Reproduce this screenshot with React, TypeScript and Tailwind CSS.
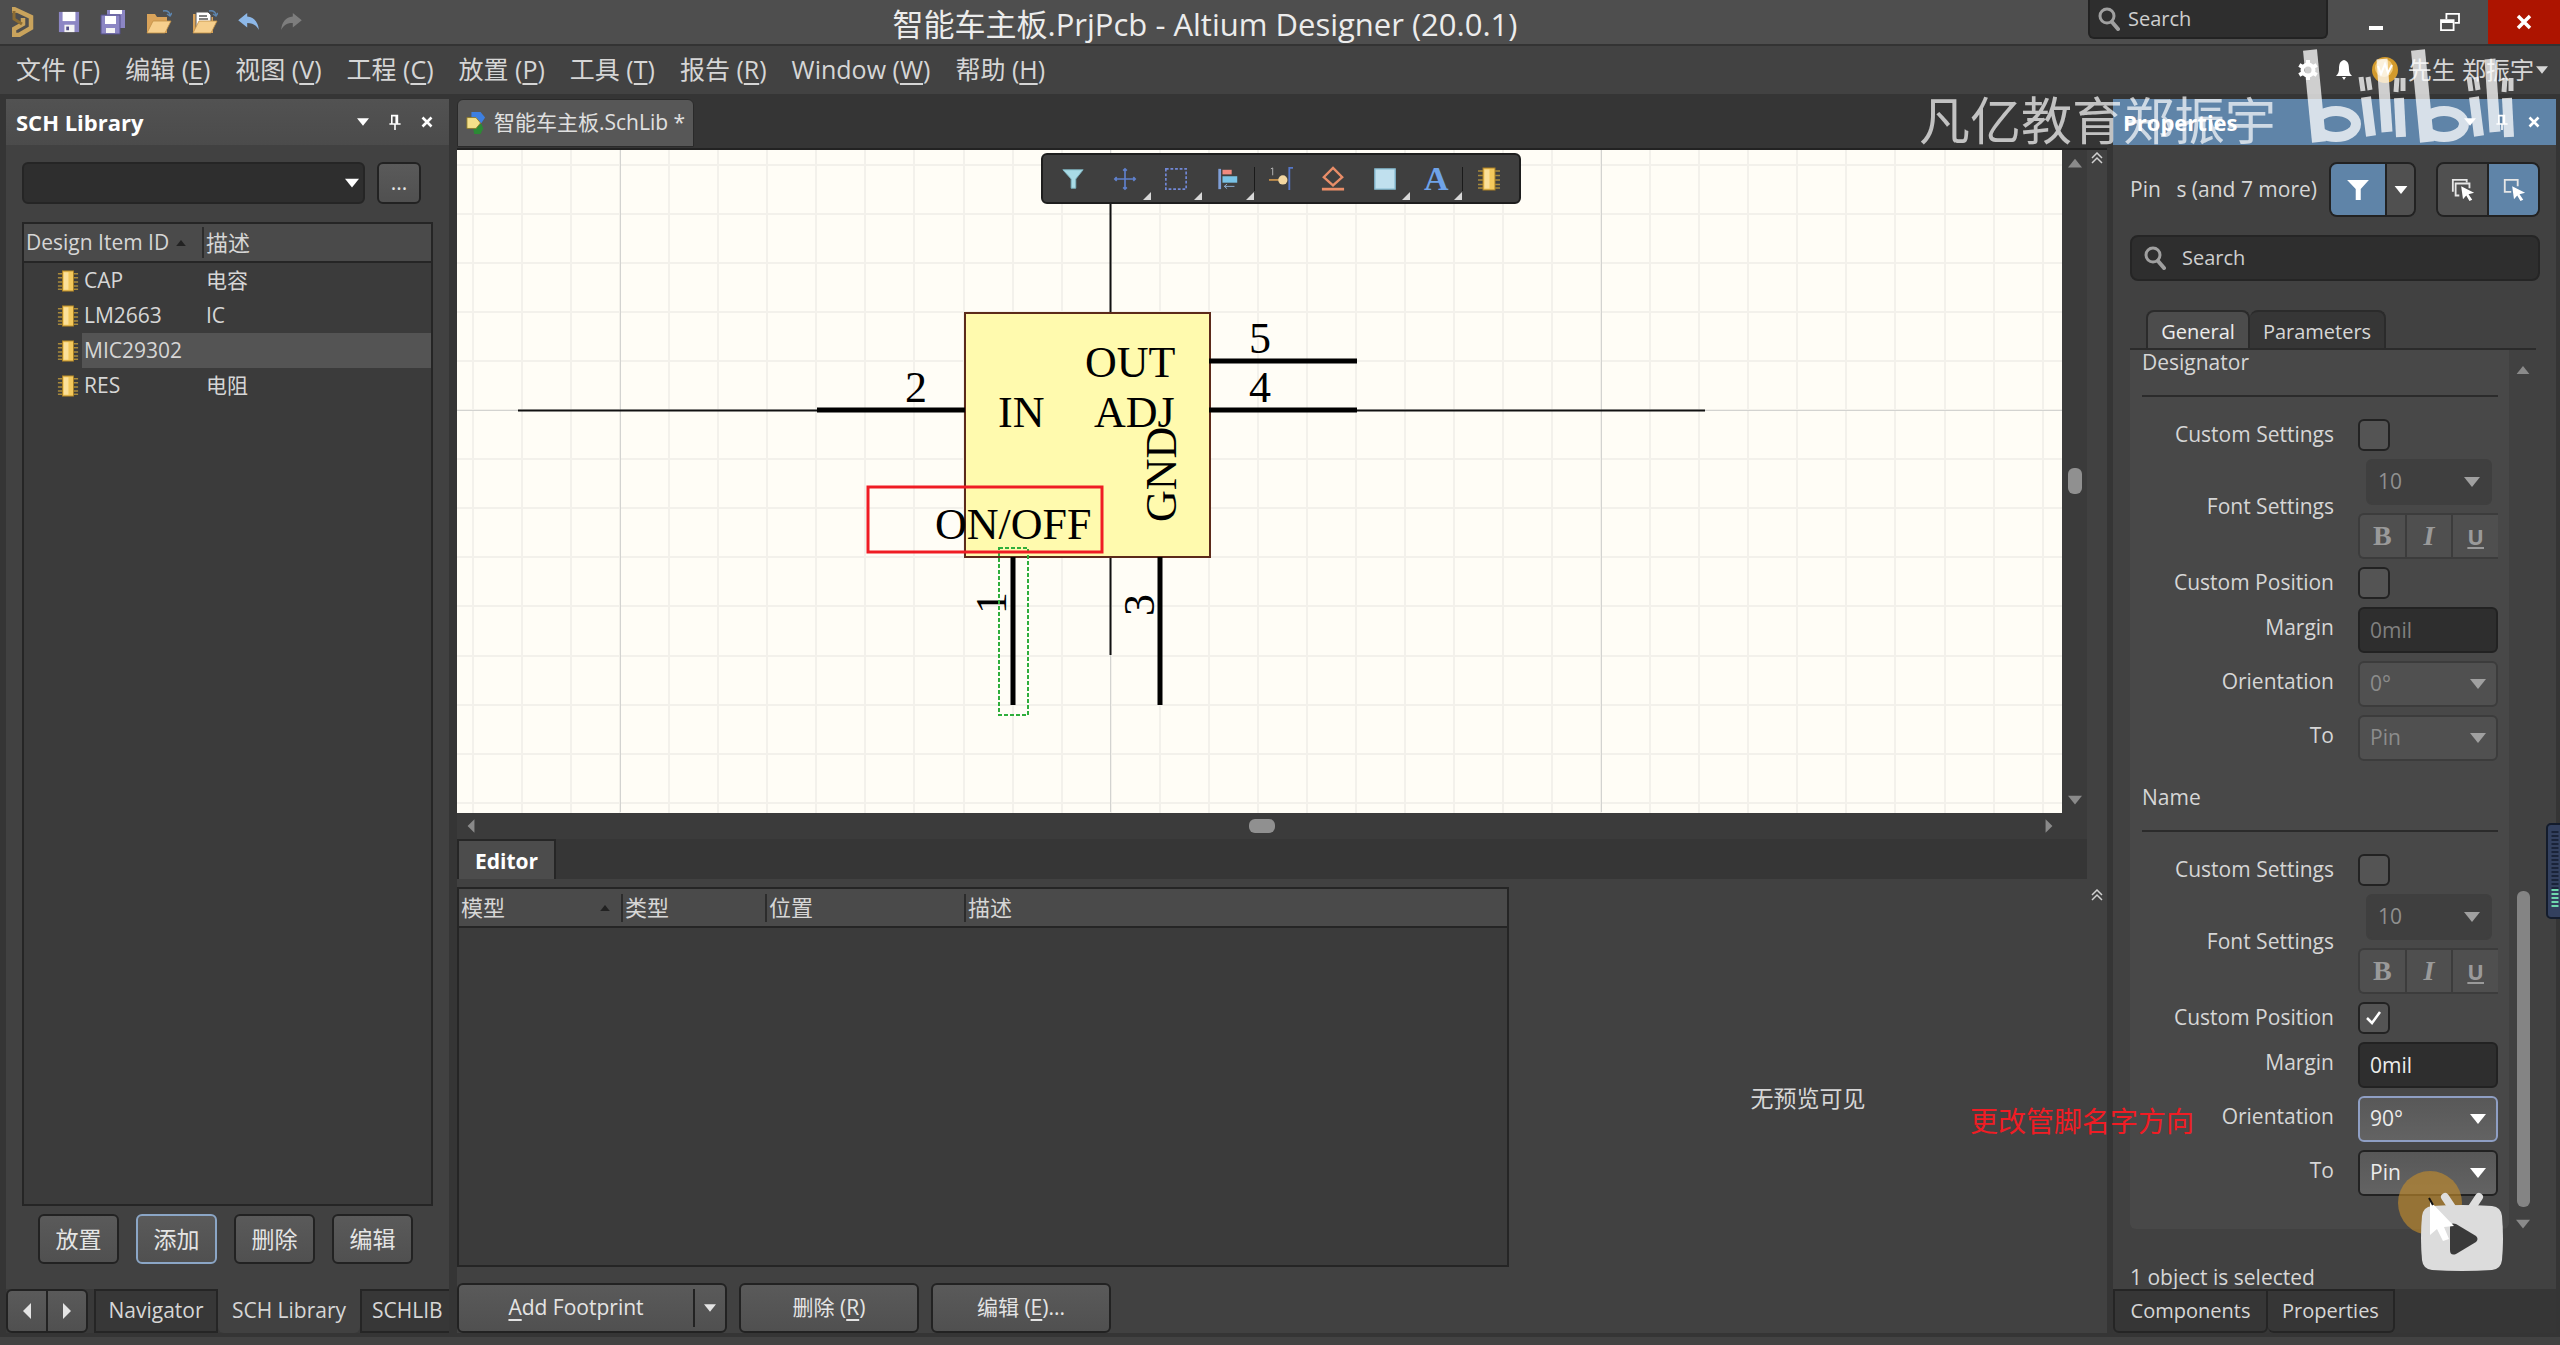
import React from 'react';
import { clsx } from 'clsx';

const FONT = "font-['Open_Sans','Noto_Sans_CJK_SC',sans-serif]";
const FACE = 'border-2 bg-linear-to-b from-[#5a5a5a] to-[#505050] text-[#e4e4e4]';
const BTN = `${FACE} border-[#222222]`;

const MENU = [
  ['文件', 'F'],
  ['编辑', 'E'],
  ['视图', 'V'],
  ['工程', 'C'],
  ['放置', 'P'],
  ['工具', 'T'],
  ['报告', 'R'],
  ['Window', 'W'],
  ['帮助', 'H'],
];

const PARTS = [
  { id: 'CAP', desc: '电容' },
  { id: 'LM2663', desc: 'IC' },
  { id: 'MIC29302', desc: '' },
  { id: 'RES', desc: '电阻' },
];

type Dir = 'up' | 'down' | 'left' | 'right';

const ARROWS: Record<Dir, string> = {
  up: 'M0 10 8 0l8 10z',
  down: 'M0 0h16L8 10z',
  left: 'M11 0v16L3 8z',
  right: 'M3 0v16l8-8z',
};

const Arrow: React.FC<{ dir: Dir; className?: string }> = ({ dir, className }) => (
  <svg
    viewBox={dir === 'up' || dir === 'down' ? '0 0 16 10' : '0 0 14 16'}
    className={clsx('shrink-0 fill-current', className)}
    aria-hidden="true"
  >
    <path d={ARROWS[dir]} />
  </svg>
);

const PinIcon = () => (
  <svg viewBox="0 0 14 20" className="h-4 w-3" fill="none" stroke="currentColor" strokeWidth="2">
    <path d="M3 12V2h7v10M0 12.500h14M7 13v7" />
    <path d="M9 2v10" strokeWidth="3" />
  </svg>
);

const CrossIcon: React.FC<{ className?: string }> = ({ className }) => (
  <svg viewBox="0 0 12 12" className={clsx('shrink-0', className)} fill="none" stroke="currentColor" strokeWidth="2.6">
    <path d="m1.500 1.500 9 9M10.500 1.500l-9 9" />
  </svg>
);

const SearchIcon = () => (
  <svg viewBox="0 0 22 24" className="h-6 w-[22px] shrink-0" fill="none" stroke="#a0a0a0">
    <circle cx="9" cy="9" r="7" strokeWidth="3" />
    <path d="m14 15 6 7" strokeWidth="4" strokeLinecap="round" />
  </svg>
);

const ChipIcon: React.FC<{ className?: string }> = ({ className }) => (
  <svg viewBox="0 0 24 24" className={clsx('shrink-0', className)}>
    <path d="M1 4h22M1 8.500h22M1 13h22M1 17.500h22M1 21h22" stroke="#a98a3c" strokeWidth="1.600" />
    <rect x="6" y="1" width="12" height="22" fill="#f4c95c" stroke="#a97f25" />
    <rect x="7.500" y="2.500" width="5" height="19" fill="#fbe09a" />
  </svg>
);

const ChevronsUp = () => (
  <svg viewBox="0 0 12 12" className="h-3 w-3" fill="none" stroke="#d0d0d0" strokeWidth="1.500">
    <path d="m1 6 5-5 5 5M1 11l5-5 5 5" />
  </svg>
);

const SaveIcon = () => (
  <svg viewBox="0 0 24 24" className="size-[22px]">
    <path d="M1 1h22v22H1z" fill="#8c86c4" />
    <path d="M5 1h14v10H5z" fill="#fff" />
    <path d="M7 15h11v8H7z" fill="#f4f4f4" />
    <path d="M9 17h3v4H9z" fill="#55508a" />
  </svg>
);

const SaveAllIcon = () => (
  <svg viewBox="0 0 26 26" className="size-[26px]">
    <path d="M7 1h18v18H7z" fill="#8c86c4" />
    <path d="M10 1h12v4H10z" fill="#fff" />
    <path d="M1 6h19v19H1z" fill="#8c86c4" stroke="#55508a" />
    <path d="M5 7h11v8H5z" fill="#fff" />
    <path d="M6 19h9v5H6z" fill="#f4f4f4" />
  </svg>
);

const FolderIcon: React.FC<{ doc?: boolean }> = ({ doc }) => (
  <svg viewBox="0 0 26 26" className="size-[26px]">
    <path d="M1 5h8l2 3h10v16H1z" fill="#d9a35a" />
    {doc && <path d="M4 3h12l3 3v13H4z" fill="#fff" stroke="#555" />}
    {doc && <path d="M7 7h8M7 10h9M7 13h9" stroke="#555" strokeWidth="1.500" />}
    <path d="M7 12h18l-6 12H1z" fill="#f6cf8d" stroke="#c28f45" strokeWidth="0.800" />
    <path d="M17 2q6-1 7 4m-3-1 3 2 2-3" fill="none" stroke="#5d86b0" strokeWidth="1.500" />
  </svg>
);

const UndoIcon: React.FC<{ redo?: boolean }> = ({ redo }) => (
  <svg viewBox="0 0 24 20" className={clsx('h-[18px] w-[22px]', redo ? '-scale-x-100 text-[#7d7d7d]' : 'text-[#8db8e8]')}>
    <path d="M10 0v4c8 1 12 6 13 15-3-6-7-8-13-8v5L0 8z" fill="currentColor" />
  </svg>
);

const CursorBoxIcon: React.FC<{ stacked?: boolean }> = ({ stacked }) => (
  <svg viewBox="0 0 26 26" className="size-6" fill="none" stroke="#e6e6e6" strokeWidth="2">
    {stacked && <path d="M2 15V2h15v3" />}
    {stacked ? <path d="M9 19H5V6h15v5" /> : <path d="M10 15H3V2h14v7" />}
    <path d="m11 9 14 7-6 1.500 4 6-3 1.500-3.500-6-3.500 4z" fill="#fff" stroke="none" />
  </svg>
);

const PanelHeader: React.FC<{ title: string; active?: boolean }> = ({ title, active }) => (
  <div
    className={clsx(
      'flex h-[46px] shrink-0 items-center justify-between pr-4 pl-2.5 text-[22px] font-bold text-white',
      active ? 'bg-[#5f84a8]' : 'bg-linear-to-b from-[#525252] to-[#4b4b4b]',
    )}
  >
    <h2>{title}</h2>
    <div className="flex items-center gap-5">
      <button aria-label="Panel menu">
        <Arrow dir="down" className="h-2 w-3" />
      </button>
      <button aria-label="Pin panel">
        <PinIcon />
      </button>
      <button aria-label="Close panel">
        <CrossIcon className="size-3" />
      </button>
    </div>
  </div>
);

const TitleBar = () => (
  <header className="relative flex h-[46px] shrink-0 items-start justify-between border-b-2 border-[#333333] bg-[#4e4e4e]">
    <div className="flex h-11 items-center gap-5 pl-3">
      <svg viewBox="0 0 22 30" className="h-[30px] w-[22px]" fill="none">
        <path d="M2 6V2l17 8v11L7 28H2v-6l9-5v-6" stroke="#c9a35c" strokeWidth="4.500" />
        <path d="M2 4v8l8 5" stroke="#8b6c33" strokeWidth="3" />
      </svg>
      <button aria-label="Save" className="ml-1">
        <SaveIcon />
      </button>
      <button aria-label="Save all">
        <SaveAllIcon />
      </button>
      <button aria-label="Open">
        <FolderIcon />
      </button>
      <button aria-label="Open project">
        <FolderIcon doc />
      </button>
      <button aria-label="Undo">
        <UndoIcon />
      </button>
      <button aria-label="Redo">
        <UndoIcon redo />
      </button>
    </div>
    <h1 className="absolute inset-x-0 top-0 mx-auto w-fit pr-[150px] text-[31px] leading-[48px] text-[#ececec]">
      智能车主板.PrjPcb - Altium Designer (20.0.1)
    </h1>
    <div className="relative flex items-start">
      <label className="mr-10 flex h-[39px] w-60 items-center gap-2 rounded-b-md border-2 border-t-0 border-[#222222] bg-[#2e2e2e] px-2">
        <SearchIcon />
        <input aria-label="Search" placeholder="Search" className="w-full text-xl text-white placeholder:text-[#cfcfcf]" />
      </label>
      <button aria-label="Minimize" className="flex h-11 w-4 items-center justify-center pt-3">
        <span className="h-1 w-3.5 bg-white" />
      </button>
      <button aria-label="Restore" className="mr-7 ml-14 flex h-11 items-center">
        <svg viewBox="0 0 22 20" className="h-[18px] w-5" fill="none" stroke="#fff" strokeWidth="2">
          <path d="M7 7V1h14v10h-5" />
          <path d="M1 8h14v11H1zM1 10h14" />
        </svg>
      </button>
      <button aria-label="Close" className="flex h-11 w-[72px] items-center justify-center bg-[#ad1400] text-white">
        <CrossIcon className="size-4" />
      </button>
    </div>
  </header>
);

const MenuBar = () => (
  <nav className="flex h-12 shrink-0 items-center justify-between bg-[#424242] pr-3 pl-4 text-[#d6d6d6]">
    <div className="flex gap-[25px] text-[25px]">
      {MENU.map(([label, key]) => (
        <button key={key}>
          {label} (<u className="underline-offset-4">{key}</u>)
        </button>
      ))}
    </div>
    <div className="flex items-center text-2xl">
      <button aria-label="Settings">
        <svg viewBox="0 0 20 20" className="size-5" fill="none" stroke="#fff">
          <circle cx="10" cy="10" r="5.500" strokeWidth="4" />
          <path d="M10 0v4m0 12v4M1.300 5l3.500 2m10.400 6 3.500 2M1.300 15l3.500-2m10.400-6 3.500-2" strokeWidth="4" />
        </svg>
      </button>
      <button aria-label="Notifications" className="ml-[18px]">
        <svg viewBox="0 0 16 20" className="h-5 w-4 fill-white">
          <path d="M8 0c4 1 5 4 5 9 0 3 1 5 3 7H0c2-2 3-4 3-7 0-5 1-8 5-9zM6 17h4l-2 3z" />
        </svg>
      </button>
      <svg viewBox="0 0 26 26" className="mr-2.5 ml-5 size-[26px]">
        <circle cx="13" cy="13" r="13" fill="#d39a2c" />
        <circle cx="12" cy="11" r="9" fill="#f0c878" />
        <path d="m6 9 3 8 4-10 3 9 4-8" fill="none" stroke="#fff" strokeWidth="2" />
      </svg>
      <button className="flex items-center">
        先生 郑振宇
        <Arrow dir="down" className="ml-0.5 h-2 w-3" />
      </button>
    </div>
  </nav>
);

const LibraryPanel = () => (
  <aside className="mt-[5px] flex w-[443px] shrink-0 flex-col bg-[#414141] text-[21px] text-[#d6d6d6]">
    <PanelHeader title="SCH Library" />
    <div className="flex min-h-0 flex-1 flex-col px-4 pt-[17px]">
      <div className="flex gap-3 pr-3">
        <div className="relative flex-1">
          <select aria-label="Library" className="h-[42px] w-full appearance-none rounded-md border-2 border-[#252525] bg-[#2e2e2e]" />
          <Arrow dir="down" className="pointer-events-none absolute top-4 right-1.5 h-2.5 w-3.5 text-white" />
        </div>
        <button aria-label="More" className={clsx(BTN, 'h-[42px] w-11 rounded-md')}>
          ...
        </button>
      </div>
      <div className="mt-[18px] min-h-0 flex-1 border-2 border-[#252525] bg-[#3b3b3b]">
        <table className="w-full table-fixed border-collapse">
          <thead>
            <tr className="h-[38px] border-b-2 border-[#252525] bg-[#4a4a4a] text-left">
              <th className="w-[180px] pl-0.5 font-normal">
                <div className="flex items-center border-r-2 border-[#2c2c2c] whitespace-nowrap">
                  Design Item ID
                  <Arrow dir="up" className="ml-1.5 h-1.5 w-3 text-[#222222]" />
                </div>
              </th>
              <th className="pl-0.5 text-[22px] font-normal">描述</th>
            </tr>
          </thead>
          <tbody>
            {PARTS.map((part) => (
              <tr key={part.id} className="h-[35px]">
                <td className="py-0 pl-8">
                  <div className="flex h-[35px] items-center">
                    <ChipIcon className="mr-0.5 h-[22px] w-6" />
                    <span className={clsx('flex h-full flex-1 items-center pl-0.5', !part.desc && 'bg-[#545454]')}>
                      {part.id}
                    </span>
                  </div>
                </td>
                <td className={clsx('py-0 pl-0.5', !part.desc && 'bg-[#545454]')}>{part.desc}</td>
              </tr>
            ))}
          </tbody>
        </table>
      </div>
      <div className="mt-2 mb-[25px] flex gap-[17px] pl-4 text-[23px]">
        {['放置', '添加', '删除', '编辑'].map((label, i) => (
          <button
            key={label}
            className={clsx(FACE, 'h-[50px] w-[81px] rounded-md', i === 1 ? 'border-[#8ba6c6]' : 'border-[#222222]')}
          >
            {label}
          </button>
        ))}
      </div>
    </div>
    <div className="flex h-[44px] shrink-0 overflow-hidden bg-[#393939] whitespace-nowrap">
      <div className={clsx(BTN, 'flex w-[82px] shrink-0 rounded-md')}>
        <button aria-label="Previous tab" className="flex flex-1 items-center justify-center border-r-2 border-[#222222]">
          <Arrow dir="left" className="h-4 w-3.5" />
        </button>
        <button aria-label="Next tab" className="flex flex-1 items-center justify-center">
          <Arrow dir="right" className="h-4 w-3.5" />
        </button>
      </div>
      <button className="ml-1.5 w-[124px] shrink-0 border-2 border-[#252525] bg-[#373737]">Navigator</button>
      <button className="w-[142px] shrink-0 rounded-b-md bg-[#414141]">SCH Library</button>
      <button className="flex-1 border-2 border-r-0 border-[#252525] bg-[#373737] pl-2.5 text-left">SCHLIB</button>
    </div>
  </aside>
);

const ToolButton: React.FC<{ name: string; menu?: boolean; children: React.ReactNode }> = ({ name, menu, children }) => (
  <button aria-label={name} className="relative flex h-full w-[52px] items-center justify-center">
    <svg viewBox="0 0 26 26" className="size-6 overflow-visible" fill="none">
      {children}
    </svg>
    {menu && (
      <svg viewBox="0 0 8 8" className="absolute right-0 bottom-0.5 size-2 fill-[#d8d8d8]">
        <path d="M8 0v8H0z" />
      </svg>
    )}
  </button>
);

const ActiveBar = () => (
  <div className="absolute top-[3px] left-[584px] flex h-[51px] w-[480px] items-center rounded-md border-2 border-[#1e1e1e] bg-[#3f3f3f] px-1">
    <ToolButton name="Filter">
      <path d="M2 3h22l-8 10v10h-5V13z" fill="#a9dbe6" stroke="#7db3c0" />
    </ToolButton>
    <ToolButton name="Move" menu>
      <path d="M13 2v22M2 13h22M11 4l2-2 2 2M11 22l2 2 2-2M4 11l-2 2 2 2m18-4 2 2-2 2" stroke="#5f80cc" strokeWidth="1.800" />
    </ToolButton>
    <ToolButton name="Select" menu>
      <path d="M2 2h22v22H2z" stroke="#7289d8" strokeWidth="1.800" strokeDasharray="3 2" />
    </ToolButton>
    <ToolButton name="Align" menu>
      <path d="M4 2v22" stroke="#7f9fd8" strokeWidth="3" />
      <path d="M7 3h10v5H7z" fill="#f08a80" />
      <path d="M7 10h16v7H7z" fill="#79c3e6" />
      <path d="M9 21h11M12 18.500 9 21l3 2.500" stroke="#8fb2d8" />
    </ToolButton>
    <span className="h-6 w-px bg-[#1a1a1a]" />
    <ToolButton name="Place pin">
      <path d="M2 2l2-1v8" stroke="#b8b8b8" />
      <path d="M0 14h11" stroke="#c08d4a" strokeWidth="2" />
      <circle cx="15" cy="14" r="5" fill="#f2d6a0" />
      <path d="M26 1h-4v24" stroke="#5577c8" strokeWidth="2" />
    </ToolButton>
    <ToolButton name="Place IEEE symbol">
      <path d="m13 1 10 10-10 9L3 11z" stroke="#e98d68" strokeWidth="2.500" />
      <path d="M1 24h24" stroke="#e98d68" strokeWidth="3" />
    </ToolButton>
    <ToolButton name="Place rectangle" menu>
      <path d="M2 2h22v22H2z" fill="#c0e0ee" stroke="#84b9d0" strokeWidth="1.500" />
    </ToolButton>
    <button
      aria-label="Place text"
      className="relative flex h-full w-[52px] items-center justify-center font-['Liberation_Serif',serif] text-[34px] font-bold text-[#6fa3e8]"
    >
      A
      <svg viewBox="0 0 8 8" className="absolute right-0 bottom-0.5 size-2 fill-[#d8d8d8]">
        <path d="M8 0v8H0z" />
      </svg>
    </button>
    <span className="h-6 w-px bg-[#1a1a1a]" />
    <button aria-label="Add part" className="flex h-full w-[52px] items-center justify-center">
      <ChipIcon className="size-6" />
    </button>
  </div>
);

const MINOR_X = Array.from({ length: 33 }, (_, i) => 16 + Math.round(i * 49.05));
const MINOR_Y = Array.from({ length: 14 }, (_, i) => 15 + Math.round(i * 49.05));

const Schematic = () => (
  <svg className="h-full w-full bg-[#fffdf6]" role="img" aria-label="MIC29302">
    {MINOR_X.map((x) => (
      <line key={x} x1={x} y1="0" x2={x} y2="100%" stroke="#f3f1eb" strokeWidth="2" />
    ))}
    {MINOR_Y.map((y) => (
      <line key={y} x1="0" y1={y} x2="100%" y2={y} stroke="#f3f1eb" strokeWidth="2" />
    ))}
    <path d="M163.500 0v662M653.500 0v662M1144.500 0v662M0 260.500h1605" stroke="#d3d3d0" />
    <path d="M653.500 50v112M653.500 408v97M61 260.500h1187" stroke="#111" strokeWidth="2" />
    <rect x="508" y="163" width="245" height="244" fill="#fffaae" stroke="#5c2a1a" strokeWidth="2" />
    <path d="M752 211h148M752 260h148M360 260h148M556 407v148M703 407v148" stroke="#000" strokeWidth="5" />
    <g className="font-['Liberation_Serif',serif] text-[44px]" fill="#000">
      <text x="628" y="227">OUT</text>
      <text x="541" y="277">IN</text>
      <text x="637" y="277">ADJ</text>
      <text x="478" y="389">ON/OFF</text>
      <text x="792" y="203">5</text>
      <text x="792" y="252">4</text>
      <text x="448" y="252">2</text>
      <text transform="translate(719 372) rotate(-90)">GND</text>
      <text transform="translate(549 464) rotate(-90)">1</text>
      <text transform="translate(697 466) rotate(-90)">3</text>
    </g>
    <rect x="542" y="398" width="29" height="167" fill="none" stroke="#2fae3c" strokeWidth="2" strokeDasharray="4 2" />
    <rect x="411" y="337" width="234" height="65" fill="none" stroke="#ef1c24" strokeWidth="3" />
  </svg>
);

const EditorPane = () => (
  <section className="flex shrink-0">
    <div className="flex min-w-0 flex-1 flex-col bg-[#414141] text-[21px] text-[#d6d6d6]">
      <div className="flex h-10 bg-[#363636]">
        <button className="w-[99px] border-2 border-b-0 border-[#262626] bg-[#4c4c4c] pt-1 font-bold text-white">Editor</button>
      </div>
      <div className="flex pt-2">
        <div>
          <div className="h-[380px] w-[1052px] border-2 border-[#252525] bg-[#3b3b3b]">
            <table className="w-full table-fixed border-collapse">
              <thead>
                <tr className="h-[38px] border-b-2 border-[#252525] bg-[#4a4a4a] text-left text-[22px]">
                  <th className="w-[164px] pl-0.5 font-normal">
                    <div className="flex h-7 items-center justify-between border-r-2 border-[#2c2c2c] pr-2.5">
                      模型
                      <Arrow dir="up" className="h-1.5 w-3 text-[#222222]" />
                    </div>
                  </th>
                  <th className="w-36 pl-0.5 font-normal">
                    <div className="flex h-7 items-center border-r-2 border-[#2c2c2c]">类型</div>
                  </th>
                  <th className="w-[199px] pl-0.5 font-normal">
                    <div className="flex h-7 items-center border-r-2 border-[#2c2c2c]">位置</div>
                  </th>
                  <th className="pl-0.5 font-normal">描述</th>
                </tr>
              </thead>
            </table>
          </div>
          <div className="mt-4 flex gap-3">
            <div className={clsx(BTN, 'flex h-[50px] w-[270px] rounded-md py-1')}>
              <button className="flex-1 border-r-2 border-[#222222]">
                <u className="underline-offset-4">A</u>dd Footprint
              </button>
              <button aria-label="Footprint options" className="flex w-[30px] items-center justify-center">
                <Arrow dir="down" className="h-2 w-3" />
              </button>
            </div>
            <button className={clsx(BTN, 'h-[50px] w-[180px] rounded-md')}>
              删除 (<u className="underline-offset-4">R</u>)
            </button>
            <button className={clsx(BTN, 'h-[50px] w-[180px] rounded-md')}>
              编辑 (<u className="underline-offset-4">E</u>)...
            </button>
          </div>
        </div>
        <p className="flex flex-1 items-center justify-center pb-6 pl-5 text-[23px]">无预览可见</p>
      </div>
    </div>
    <div className="flex w-5 justify-center bg-[#414141] pt-[50px]">
      <ChevronsUp />
    </div>
  </section>
);

const CenterPane = () => (
  <main className="mx-2 mr-1.5 flex min-w-0 flex-1 flex-col">
    <div className="flex h-14 shrink-0 items-end border-b-2 border-[#222222] pb-px">
      <button className="flex h-12 items-center gap-2 rounded-t-md border border-[#2a2a2a] bg-[#575757] px-2 text-[21px] text-[#e0e0e0]">
        <svg viewBox="0 0 22 26" className="h-6 w-5">
          <path d="M6 1h10l5 6-4 6H6z" fill="#3d7fe0" />
          <path d="M7 14h10l2 5-3 6H9z" fill="#2c8a35" />
          <path d="M1 7h10l5 6-5 6H1z" fill="#f5e08a" stroke="#8b7a2c" />
        </svg>
        <span>智能车主板.SchLib *</span>
      </button>
    </div>
    <div className="flex min-h-0 flex-1 bg-[#3b3b3b]">
      <div className="flex min-w-0 flex-1 flex-col">
        <div className="flex min-h-0 flex-1">
          <div className="relative min-w-0 flex-1">
            <Schematic />
            <ActiveBar />
          </div>
          <div className="flex w-[25px] flex-col items-center pt-2 pb-2 text-[#8a8a8a]">
            <Arrow dir="up" className="h-2.5 w-3.5" />
            <div className="flex w-full flex-1 justify-center pt-[300px]">
              <span className="h-[26px] w-3.5 rounded-md bg-[#909090]" />
            </div>
            <Arrow dir="down" className="h-2.5 w-3.5" />
          </div>
        </div>
        <div className="flex h-[26px] items-center pr-8 pl-2 text-[#8a8a8a]">
          <Arrow dir="left" className="h-3.5 w-3" />
          <div className="flex-1 pl-[772px]">
            <span className="block h-3.5 w-[26px] rounded-md bg-[#909090]" />
          </div>
          <Arrow dir="right" className="h-3.5 w-3" />
        </div>
      </div>
      <div className="flex w-5 justify-center bg-[#414141] pt-0.5">
        <ChevronsUp />
      </div>
    </div>
    <EditorPane />
  </main>
);

const CheckBox: React.FC<{ id: string; checked?: boolean }> = ({ id, checked }) => (
  <span className="relative h-8 w-8">
    <input
      id={id}
      type="checkbox"
      defaultChecked={checked}
      className="peer block size-8 appearance-none rounded-md border-2 border-[#222222] bg-[#545454]"
    />
    <svg
      viewBox="0 0 16 16"
      className="pointer-events-none absolute top-2 left-2 hidden size-4 peer-checked:block"
      fill="none"
      stroke="#fff"
      strokeWidth="2.500"
    >
      <path d="m1 8 5 5 8-11" />
    </svg>
  </span>
);

type DropDownProps = { id: string; value: string; disabled?: boolean; focused?: boolean; flat?: boolean };

const DropDown: React.FC<DropDownProps> = ({ id, value, disabled, focused, flat }) => (
  <div className={clsx('relative', flat ? 'pr-1.5 pl-2' : 'w-full')}>
    <select
      id={id}
      disabled={disabled}
      className={clsx(
        'h-[46px] w-full appearance-none rounded-md border-2 px-2.5 opacity-100',
        flat && 'border-[#3f3f3f] bg-[#3f3f3f] text-[#909090]',
        !flat && disabled && 'border-[#3c3c3c] bg-[#505050] text-[#8c8c8c]',
        !disabled && 'bg-linear-to-b from-[#585858] to-[#636363] text-[#ececec]',
        !disabled && (focused ? 'border-[#8f9fc4]' : 'border-[#222222]'),
      )}
    >
      <option>{value}</option>
    </select>
    <Arrow
      dir="down"
      className={clsx(
        'pointer-events-none absolute top-[18px] h-2.5 w-4',
        flat ? 'right-[18px]' : 'right-3',
        disabled ? 'text-[#a0a0a0]' : 'text-white',
      )}
    />
  </div>
);

type PinTextProps = { name: string; custom?: boolean; orientation: string };

const PinTextSection: React.FC<PinTextProps> = ({ name, custom, orientation }) => (
  <section>
    <h3 className="leading-6">{name}</h3>
    <hr className="mt-[21px] mb-[22px] border-t-2 border-[#2b2b2b]" />
    <div className="grid grid-cols-[192px_1fr] items-center gap-x-6 gap-y-2">
      <label htmlFor={`${name}-settings`} className="text-right">
        Custom Settings
      </label>
      <CheckBox id={`${name}-settings`} />
      <label htmlFor={`${name}-font`} className="row-span-2 pb-1 text-right">
        Font Settings
      </label>
      <DropDown id={`${name}-font`} value="10" disabled flat />
      <div className="flex h-[46px] rounded-l-md border-2 border-r-0 border-[#3c3c3c] bg-[#4f4f4f] font-['Liberation_Serif',serif] text-[28px] font-bold text-[#9a9a9a]">
        <button className="flex-1 border-r-2 border-[#3c3c3c]">B</button>
        <button className="flex-1 border-r-2 border-[#3c3c3c] italic">I</button>
        <button className="flex-1 font-['Open_Sans',sans-serif] text-[22px] underline">U</button>
      </div>
      <label htmlFor={`${name}-position`} className="text-right">
        Custom Position
      </label>
      <CheckBox id={`${name}-position`} checked={custom} />
      <label htmlFor={`${name}-margin`} className="pb-1 text-right">
        Margin
      </label>
      <input
        id={`${name}-margin`}
        defaultValue="0mil"
        disabled={!custom}
        className="h-[46px] w-full rounded-md border-2 border-[#222222] bg-[#2e2e2e] px-2.5 text-[#ececec] disabled:text-[#808080]"
      />
      <label htmlFor={`${name}-orientation`} className="pb-1 text-right">
        Orientation
      </label>
      <DropDown id={`${name}-orientation`} value={orientation} disabled={!custom} focused={custom} />
      <label htmlFor={`${name}-to`} className="pb-1 text-right">
        To
      </label>
      <DropDown id={`${name}-to`} value="Pin" disabled={!custom} />
    </div>
  </section>
);

const PropertiesPanel = () => (
  <aside className="mt-[5px] flex w-[443px] shrink-0 flex-col bg-[#414141] text-[21px] text-[#d6d6d6]">
    <PanelHeader title="Properties" active />
    <div className="flex items-center pt-[17px] pr-4 pl-[17px]">
      <p className="flex flex-1 justify-between pr-3 whitespace-nowrap">
        <span>Pin</span>
        <span>s (and 7 more)</span>
      </p>
      <div className="flex h-[55px] w-[87px] overflow-hidden rounded-lg border-2 border-[#222222]">
        <button aria-label="Filter" className="flex w-14 items-center justify-center border-r-2 border-[#222222] bg-[#5f84a8]">
          <svg viewBox="0 0 24 22" className="h-5 w-[22px] fill-white">
            <path d="M0 0h24l-9 10v12H9.500V10z" />
          </svg>
        </button>
        <button aria-label="Filter options" className="flex flex-1 items-center justify-center bg-[#505050] text-white">
          <Arrow dir="down" className="h-2 w-3.5" />
        </button>
      </div>
      <div className="ml-5 flex h-[55px] w-[104px] overflow-hidden rounded-lg border-2 border-[#222222]">
        <button aria-label="Select many" className="flex flex-1 items-center justify-center border-r-2 border-[#222222] bg-[#505050]">
          <CursorBoxIcon stacked />
        </button>
        <button aria-label="Select one" className="flex flex-1 items-center justify-center bg-[#5f84a8]">
          <CursorBoxIcon />
        </button>
      </div>
    </div>
    <label className="mt-[18px] mr-4 ml-[17px] flex h-[46px] shrink-0 items-center gap-4 rounded-lg border-2 border-[#252525] bg-[#2e2e2e] px-3 text-xl">
      <SearchIcon />
      <input aria-label="Search properties" placeholder="Search" className="w-full placeholder:text-[#cfcfcf]" />
    </label>
    <div className="mt-[29px] mr-5 ml-[17px] flex h-10 shrink-0 border-b-2 border-[#2b2b2b] pl-4 text-xl">
      <button className="w-[104px] rounded-t-lg border-2 border-b-0 border-[#2b2b2b] bg-[#4c4c4c] pt-1 text-[#ececec]">General</button>
      <button className="w-[136px] rounded-t-lg border-2 border-b-0 border-l-0 border-[#2b2b2b] bg-[#363636] pt-1">Parameters</button>
    </div>
    <div className="flex min-h-0 flex-1 pl-[17px]">
      <div className="flex min-h-0 w-[379px] flex-col gap-6 rounded-b-md bg-[#484848] pr-[11px] pl-3">
        <PinTextSection name="Designator" orientation="0°" />
        <PinTextSection name="Name" custom orientation="90°" />
      </div>
      <div className="ml-1.5 flex w-4 flex-col items-center pt-4 text-[#8a8a8a]">
        <Arrow dir="up" className="h-2 w-3.5" />
        <div className="flex flex-1 items-end pb-3">
          <span className="h-[316px] w-[13px] rounded-md bg-[#848484]" />
        </div>
        <Arrow dir="down" className="h-2.5 w-3.5" />
      </div>
    </div>
    <p className="mt-9 shrink-0 pl-[17px] leading-6">1 object is selected</p>
    <div className="flex h-[44px] shrink-0 bg-[#363636] text-xl">
      <button className="w-[155px] rounded-b-md border-2 border-[#252525]">Components</button>
      <button className="w-[127px] rounded-b-md border-2 border-l-0 border-[#252525]">Properties</button>
    </div>
  </aside>
);

// one half of the wordmark: a slanted stem with its bowl and three strokes
const BiliHalf = () => (
  <g stroke="currentColor" fill="none">
    <line x1="20" y1="10" x2="29" y2="102" strokeWidth="14" />
    <ellipse cx="46" cy="84" rx="20" ry="13" strokeWidth="10" />
    <line x1="76" y1="57" x2="81" y2="96" strokeWidth="10" />
    <line x1="92" y1="19" x2="97" y2="92" strokeWidth="11" />
    <line x1="109" y1="58" x2="111" y2="97" strokeWidth="10" />
    <path d="m71 37 2 14m5-14 2 13m27-12-1 14m7-14v13" strokeWidth="5" />
  </g>
);

const Overlays = () => (
  <>
    <p className="pointer-events-none absolute top-[84px] right-[284px] text-[51px] leading-[72px] whitespace-nowrap text-white/70">
      凡亿教育郑振宇
    </p>
    <svg viewBox="0 0 270 110" className="pointer-events-none absolute top-10 right-0 h-[110px] w-[270px] opacity-75" aria-label="bilibili">
      <g color="#fff">
        <BiliHalf />
        <g transform="translate(108 0)">
          <BiliHalf />
        </g>
      </g>
    </svg>
    <p className="pointer-events-none absolute top-[1099px] right-[366px] text-[28px] leading-[44px] whitespace-nowrap text-[#f01c24]">
      更改管脚名字方向
    </p>
    <svg viewBox="0 0 110 110" className="pointer-events-none absolute top-[1168px] right-[54px] size-[110px]">
      <circle cx="34" cy="35" r="32" fill="#c08a2c" opacity="0.650" />
      <path d="m49 29 8 12M83 29l-8 12" stroke="#dedede" strokeWidth="8" strokeLinecap="round" />
      <path d="M36 38q30-2 60 0 9 1 10 10 2 23 0 44-1 9-10 10-30 2-60 0-9-1-10-10-2-22 0-44 1-9 10-10z" fill="#dcdcdc" />
      <path d="M54 60q0-6 6-4l20 12q3 3 0 6L60 86q-6 2-6-4z" fill="#3a3a3a" />
      <path d="m34 33 24 25-10 1 5 12-6 2-6-12-7 6z" fill="#fff" />
      <path d="m33 30 4 7" stroke="#111" strokeWidth="2" />
    </svg>
    <svg viewBox="0 0 14 96" className="pointer-events-none absolute top-[823px] right-0 h-24 w-3.5">
      <rect x="1" y="1" width="20" height="94" rx="4" fill="#33405e" stroke="#141c2c" strokeWidth="2" />
      <path d="M9 8v58" stroke="#1a2338" strokeWidth="7" strokeDasharray="2 2" />
      <path d="M9 66v18" stroke="#6fd8ae" strokeWidth="7" strokeDasharray="2 2" />
    </svg>
  </>
);

export default function App() {
  return (
    <div className={clsx(FONT, 'relative flex h-screen min-h-[1345px] flex-col overflow-hidden bg-[#353535]')}>
      <TitleBar />
      <MenuBar />
      <div className="flex min-h-0 flex-1 pr-1 pl-1.5">
        <LibraryPanel />
        <CenterPane />
        <PropertiesPanel />
      </div>
      <footer className="mt-1 h-2 shrink-0 bg-[#424242]" />
      <Overlays />
    </div>
  );
}
